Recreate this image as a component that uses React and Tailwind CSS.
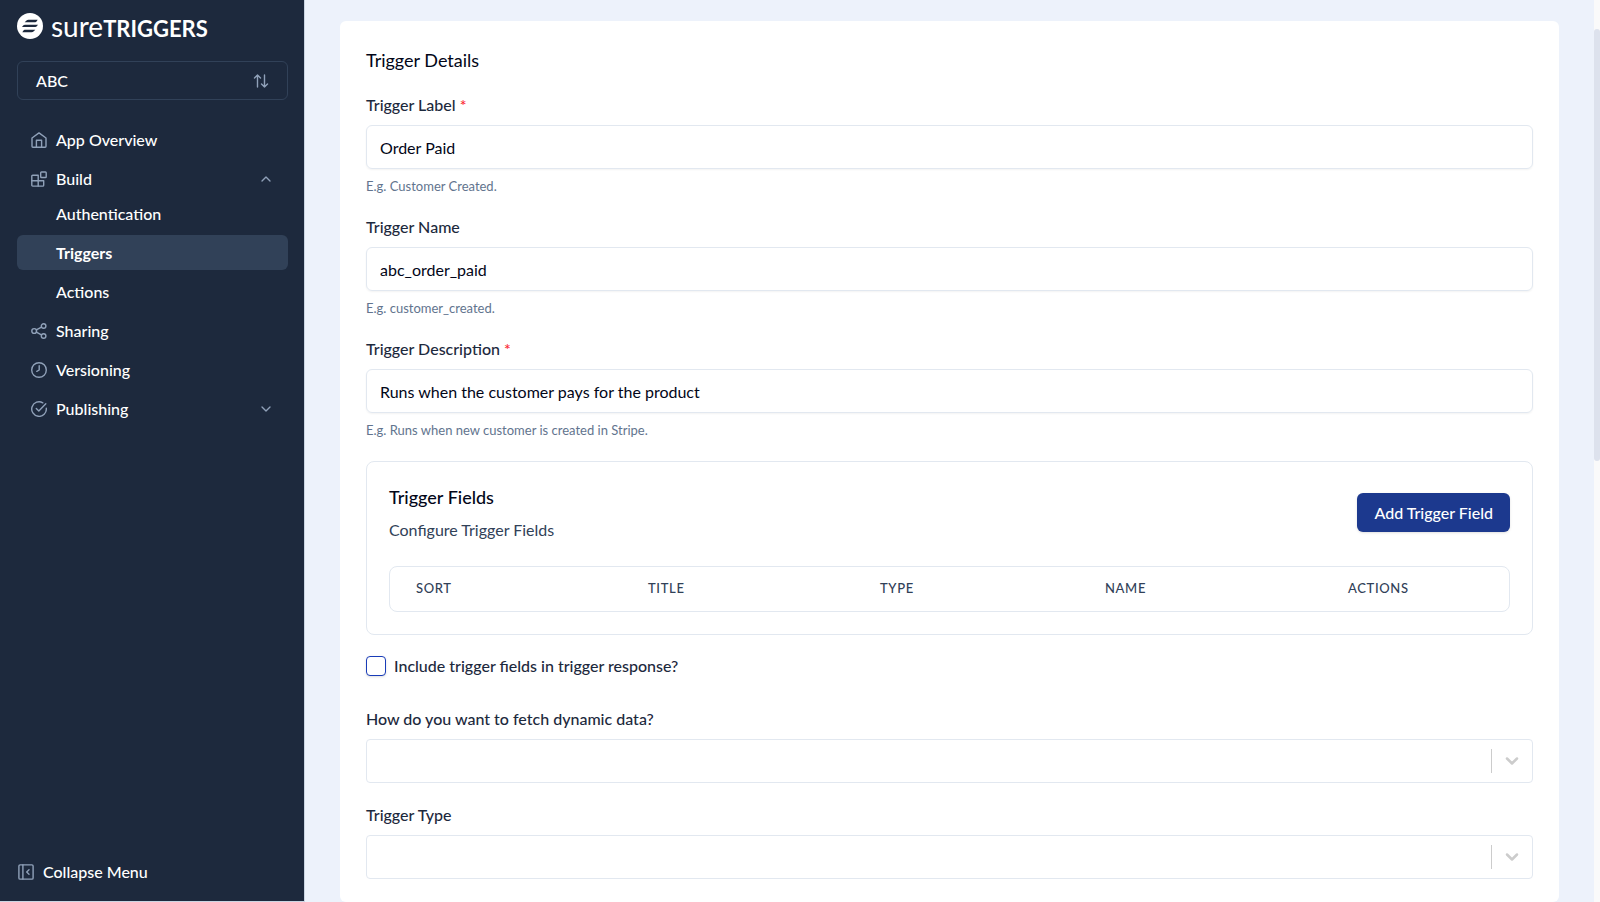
import { useState } from "react";
import { ChevronDown, ChevronUp } from "lucide-react";

function Icon({ children }) {
  return (
    <svg
      viewBox="0 0 16 16"
      className="size-4 shrink-0"
      fill="none"
      stroke="currentColor"
      strokeWidth="1.4"
      strokeLinecap="round"
      strokeLinejoin="round"
      aria-hidden="true"
    >
      {children}
    </svg>
  );
}

const icons = {
  home: (
    <Icon>
      <path d="M1 6 8 .9 15 6v8.300a.9.9 0 0 1-.9.900H1.900a.9.9 0 0 1-.9-.900Z" />
      <path d="M5.400 15.200V8.300h5.200v6.900" />
    </Icon>
  ),
  build: (
    <Icon>
      <path d="M1.700 4.200h5.500v5.500h5.500v4.500a.9.9 0 0 1-.9.900H1.700a.9.9 0 0 1-.9-.900V5.100a.9.9 0 0 1 .9-.900Z" />
      <path d="M.8 9.700h6.400v5.400" />
      <rect x="9.700" y="1" width="5.500" height="5.500" rx=".8" />
    </Icon>
  ),
  share: (
    <Icon>
      <circle cx="3.200" cy="8" r="2.400" />
      <circle cx="12.600" cy="3" r="2.300" />
      <circle cx="12.600" cy="13" r="2.300" />
      <path d="m5.300 6.900 5.200-2.800M5.300 9.100l5.200 2.800" />
    </Icon>
  ),
  clock: (
    <Icon>
      <circle cx="8" cy="8" r="7.300" />
      <path d="M8.200 3.800V8l-2.400 1.300" />
    </Icon>
  ),
  check: (
    <Icon>
      <path d="M11.800 1.800A7.300 7.300 0 1 0 15.300 7.300" />
      <path d="m5.300 7.600 2.500 2.400 7-7.300" />
    </Icon>
  ),
  collapse: (
    <Icon>
      <rect x=".9" y=".9" width="14.200" height="14.200" rx="1.200" />
      <path d="M4.900.9v14.200M11 5.800 8.700 8l2.300 2.200" />
    </Icon>
  ),
  swap: (
    <Icon>
      <path d="M4.500 14V2M1.500 5l3-3 3 3M11.500 2v12M8.500 11l3 3 3-3" />
    </Icon>
  ),
};

function NavItem({ icon, label, active, trailing }) {
  return (
    <a
      href="#"
      aria-current={active ? "page" : undefined}
      className={`flex h-[35px] items-center gap-[9px] rounded-md px-3.5 text-white ${
        active ? "bg-slate-700 font-bold" : "font-medium"
      }`}
    >
      <span className="flex w-4 justify-center text-slate-400">{icon}</span>
      <span className="flex-1">{label}</span>
      {trailing}
    </a>
  );
}

function Sidebar() {
  return (
    <aside className="flex w-[305px] shrink-0 flex-col border-r border-b border-slate-300 bg-slate-800 pt-[13px] pr-4 pb-[15px] pl-[17px] text-base">
      <div className="flex h-[26px] items-center gap-2 text-white">
        <svg viewBox="0 0 26 26" className="size-[26px]" aria-hidden="true">
          <circle cx="13" cy="13" r="13" fill="#fff" />
          <g className="fill-slate-800">
            <path d="M11.500 6.800h9.200l-1 1.500a2 2 0 0 1-1.600.9H7.700l1.500-1.500A3.600 3.600 0 0 1 11.500 6.800Z" />
            <path d="M8 11.800h13l-1.200 1.500a2 2 0 0 1-1.500.8H5l1.200-1.500A2.400 2.400 0 0 1 8 11.800Z" />
            <path d="M7.800 16.800h10.500l-1.500 1.500a3.600 3.600 0 0 1-2.300.9H5.300l1-1.500a2 2 0 0 1 1.500-.9Z" />
          </g>
        </svg>
        <span className="flex items-baseline leading-none">
          <span className="text-[28px]">sure</span>
          <span className="text-[22px] font-bold">TRIGGERS</span>
        </span>
      </div>

      <button
        type="button"
        className="mt-[22px] flex h-[39px] items-center justify-between rounded-md border border-slate-700 px-[18px] font-medium text-white"
      >
        ABC
        <span className="text-slate-400">{icons.swap}</span>
      </button>

      <nav className="mt-[22px] flex flex-col gap-1">
        <NavItem icon={icons.home} label="App Overview" />
        <div>
          <NavItem
            icon={icons.build}
            label="Build"
            trailing={<ChevronUp className="size-4 text-slate-400" />}
          />
          <div className="flex flex-col gap-1">
            <NavItem label="Authentication" />
            <NavItem label="Triggers" active />
            <NavItem label="Actions" />
          </div>
        </div>
        <NavItem icon={icons.share} label="Sharing" />
        <NavItem icon={icons.clock} label="Versioning" />
        <NavItem
          icon={icons.check}
          label="Publishing"
          trailing={<ChevronDown className="size-4 text-slate-400" />}
        />
      </nav>

      <button
        type="button"
        className="mt-auto flex h-7 items-center gap-[9px] font-medium text-white"
      >
        <span className="pl-px text-slate-400">{icons.collapse}</span>
        Collapse Menu
      </button>
    </aside>
  );
}

function Label({ htmlFor, required, children }) {
  return (
    <label htmlFor={htmlFor} className="text-base leading-5 font-medium text-slate-800">
      {children}
      {required && <span className="ml-1 text-red-500">*</span>}
    </label>
  );
}

function TextField({ id, label, required, initial, help }) {
  const [value, setValue] = useState(initial);
  return (
    <div className="flex flex-col">
      <Label htmlFor={id} required={required}>
        {label}
      </Label>
      <input
        id={id}
        type="text"
        value={value}
        onChange={(e) => setValue(e.target.value)}
        aria-describedby={`${id}-help`}
        className="mt-2.5 h-11 rounded-md border border-slate-200 px-[13px] text-base text-slate-950 shadow-xs outline-none focus:border-blue-800"
      />
      <p id={`${id}-help`} className="mt-[7px] text-[13px] leading-5 text-slate-500">
        {help}
      </p>
    </div>
  );
}

function SelectField({ id, label }) {
  return (
    <div className="flex flex-col">
      <Label htmlFor={id}>{label}</Label>
      <div className="relative mt-2.5 h-11">
        <select
          id={id}
          className="size-full appearance-none rounded-sm border border-slate-200 bg-white pr-12 pl-3 text-base outline-none"
        >
          <option value=""></option>
        </select>
        <span className="pointer-events-none absolute inset-y-2.5 right-px flex w-[41px] items-center justify-center border-l border-[#cccccc] text-[#cccccc]">
          <ChevronDown className="size-5" strokeWidth={3} />
        </span>
      </div>
    </div>
  );
}

function TriggerFields() {
  const cell = "px-[26px] text-left font-medium tracking-wider";
  return (
    <section className="mt-[21px] rounded-lg border border-slate-200 px-[22px] pt-[23px] pb-[22px]">
      <div className="flex items-center justify-between pb-[26px]">
        <div>
          <h3 className="text-lg leading-6 font-medium text-slate-950">Trigger Fields</h3>
          <p className="mt-[11px] text-base leading-5 text-slate-700">Configure Trigger Fields</p>
        </div>
        <button
          type="button"
          className="h-[39px] rounded-md bg-blue-900 px-[17px] text-base font-medium text-white shadow-sm"
        >
          Add Trigger Field
        </button>
      </div>
      <div className="rounded-lg border border-slate-200">
        <table className="w-full table-fixed">
          <thead>
            <tr className="h-11 text-[13px] text-slate-700">
              <th className={`${cell} w-[232px]`}>SORT</th>
              <th className={`${cell} w-[232px]`}>TITLE</th>
              <th className={`${cell} w-[225px]`}>TYPE</th>
              <th className={`${cell} w-[243px]`}>NAME</th>
              <th className={`${cell} w-[188px]`}>ACTIONS</th>
            </tr>
          </thead>
        </table>
      </div>
    </section>
  );
}

export default function App() {
  return (
    <div className="flex h-screen overflow-hidden bg-[#edf2fb] font-[Lato,sans-serif]">
      <Sidebar />
      <main className="min-w-0 flex-1 overflow-hidden px-[35px] pt-[21px]">
        <form className="min-h-full rounded-md bg-white px-[26px] pt-[27px]">
          <h2 className="text-lg leading-6 text-slate-950">Trigger Details</h2>
          <div className="mt-[23px] flex flex-col gap-[21px]">
            <TextField
              id="trigger-label"
              label="Trigger Label"
              required
              initial="Order Paid"
              help="E.g. Customer Created."
            />
            <TextField
              id="trigger-name"
              label="Trigger Name"
              initial="abc_order_paid"
              help="E.g. customer_created."
            />
            <TextField
              id="trigger-description"
              label="Trigger Description"
              required
              initial="Runs when the customer pays for the product"
              help="E.g. Runs when new customer is created in Stripe."
            />
          </div>
          <TriggerFields />
          <div className="mt-[21px] flex items-center gap-2">
            <input
              id="include-fields"
              type="checkbox"
              className="size-5 appearance-none rounded-sm border border-blue-800 bg-white shadow-sm checked:bg-blue-800"
            />
            <Label htmlFor="include-fields">Include trigger fields in trigger response?</Label>
          </div>
          <div className="mt-[33px] flex flex-col gap-[22px]">
            <SelectField id="dynamic-data" label="How do you want to fetch dynamic data?" />
            <SelectField id="trigger-type" label="Trigger Type" />
          </div>
        </form>
      </main>
      <div aria-hidden="true" className="w-1.5 shrink-0 bg-neutral-50 pt-[29px]">
        <div className="h-[432px] rounded-sm bg-[#dde2ed]" />
      </div>
    </div>
  );
}
